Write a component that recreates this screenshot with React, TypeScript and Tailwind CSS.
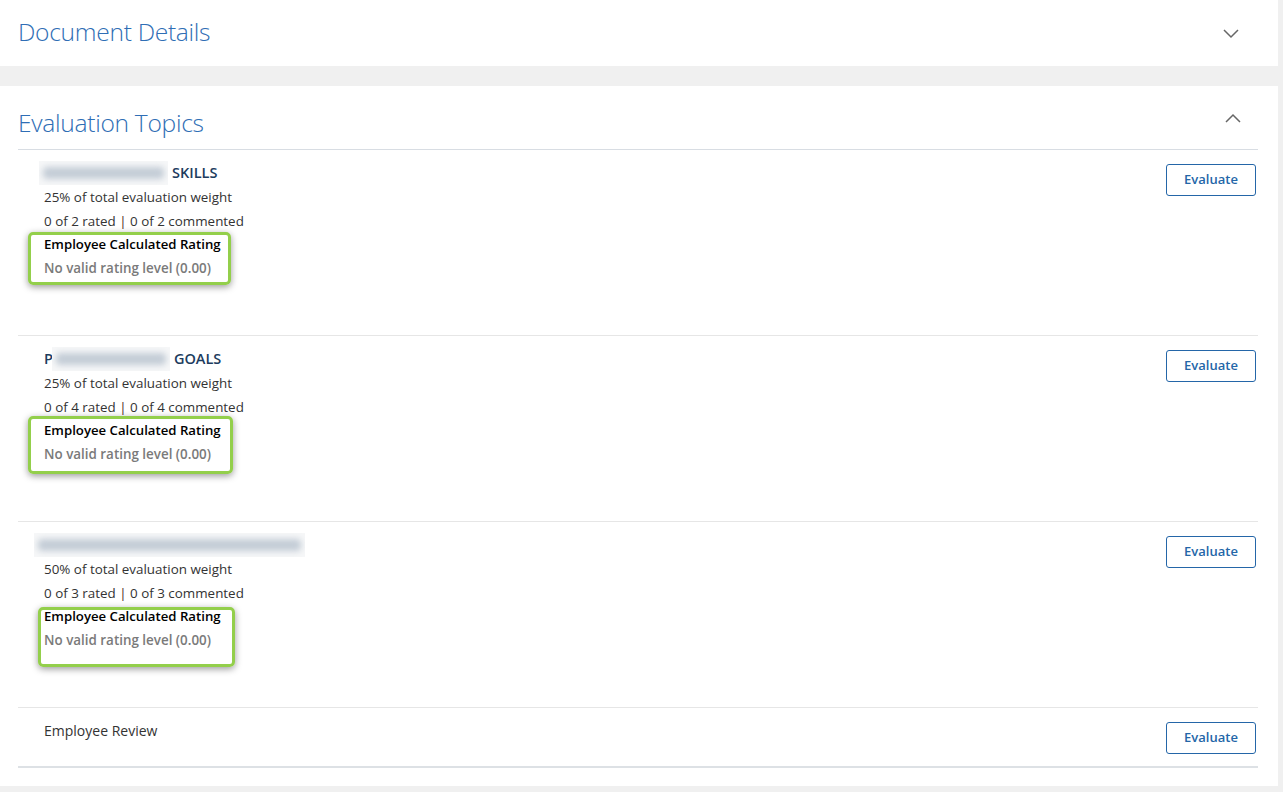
import React from "react";

type Topic = {
  blurWidth: number;
  blurShift: number;
  lead?: string;
  suffix?: string;
  weight: string;
  rated: string;
  commented: string;
  box: string;
};

const topics: Topic[] = [
  {
    blurWidth: 129,
    blurShift: -5,
    suffix: "SKILLS",
    weight: "25% of total evaluation weight",
    rated: "0 of 2 rated",
    commented: "0 of 2 commented",
    box: "left-[-16px] top-[-1px] w-[203px] h-[53px]",
  },
  {
    blurWidth: 118,
    blurShift: -1,
    lead: "P",
    suffix: "GOALS",
    weight: "25% of total evaluation weight",
    rated: "0 of 4 rated",
    commented: "0 of 4 commented",
    box: "left-[-16px] top-[-3px] w-[205px] h-[58px]",
  },
  {
    blurWidth: 271,
    blurShift: -10,
    weight: "50% of total evaluation weight",
    rated: "0 of 3 rated",
    commented: "0 of 3 commented",
    box: "left-[-6px] top-[2px] w-[197px] h-[60px]",
  },
];

function Chevron({ up }: { up?: boolean }) {
  return (
    <svg width="18" height="12" viewBox="0 0 18 12" className="text-[#666]">
      <path
        d={up ? "M2 10 L9 3 L16 10" : "M2 3 L9 10 L16 3"}
        fill="none"
        stroke="currentColor"
        strokeWidth="1.5"
      />
    </svg>
  );
}

function EvaluateButton() {
  return (
    <button className="mr-[2px] h-[32px] w-[90px] rounded-[3px] border border-[#2466a8] bg-white text-[13px] font-semibold text-[#2466a8]">
      Evaluate
    </button>
  );
}

function Blur({ width }: { width: number }) {
  return (
    <span
      className="inline-flex h-[24px] items-center overflow-hidden bg-[#f6f7f8] px-[4px]"
      style={{ width }}
    >
      <span className="h-[12px] w-full rounded-[4px] bg-[#c3ccd6] blur-[3px]" />
    </span>
  );
}

function TopicRow({ t }: { t: Topic }) {
  return (
    <div className="flex h-[186px] justify-between border-b border-[#e6e6e6] pl-[26px] pt-[12px]">
      <div className="flex flex-col text-[13.4px] text-[#333]">
        <div className="flex h-[22px] items-center text-[14.5px] font-semibold text-[#1d3c5e]">
          {t.lead && <span>{t.lead}</span>}
          <span style={{ marginLeft: t.blurShift }}>
            <Blur width={t.blurWidth} />
          </span>
          {t.suffix && <span className="ml-[4px]">{t.suffix}</span>}
        </div>
        <div className="mt-[1px] leading-[24px]">{t.weight}</div>
        <div className="leading-[24px]">
          {t.rated} <span className="text-[#4a1c1c]">|</span> {t.commented}
        </div>
        <div className="relative">
          <div
            className={`absolute ${t.box} rounded-[5px] border-[3px] border-[#93cf4b] shadow-[0_2px_7px_rgba(0,0,0,0.4)]`}
          />
          <div className="relative text-[13.2px] font-semibold leading-[22px] text-black">
            Employee Calculated Rating
          </div>
          <div className="relative font-semibold leading-[26px] text-[#7a7a7a]">
            No valid rating level (0.00)
          </div>
        </div>
      </div>
      <div className="pt-[2px]">
        <EvaluateButton />
      </div>
    </div>
  );
}

export default function App() {
  return (
    <div
      className="min-h-[792px] bg-[#f0f0f0] pr-[5px]"
      style={{ fontFamily: '"Open Sans", "Noto Sans", sans-serif' }}
    >
      <section className="flex h-[66px] items-center justify-between bg-white pl-[18px] pr-[38px]">
        <h2 className="mt-[-2px] text-[24.6px] font-light tracking-[-0.3px] text-[#2f6eb5]">
          Document Details
        </h2>
        <Chevron />
      </section>

      <section className="mt-[20px] bg-white px-[18px] pr-[20px] pb-[18px]">
        <div className="flex h-[64px] items-center justify-between border-b border-[#d8dde3] pr-[16px]">
          <h2 className="pt-[12px] text-[24.6px] font-light tracking-[-0.3px] text-[#2f6eb5]">
            Evaluation Topics
          </h2>
          <Chevron up />
        </div>
        {topics.map((t, i) => (
          <TopicRow key={i} t={t} />
        ))}
        <div className="flex h-[60px] justify-between border-b-2 border-[#dde1e5] pl-[26px] pt-[12px]">
          <div className="text-[14px] text-[#333]">Employee Review</div>
          <div className="pt-[2px]">
            <EvaluateButton />
          </div>
        </div>
      </section>
    </div>
  );
}
